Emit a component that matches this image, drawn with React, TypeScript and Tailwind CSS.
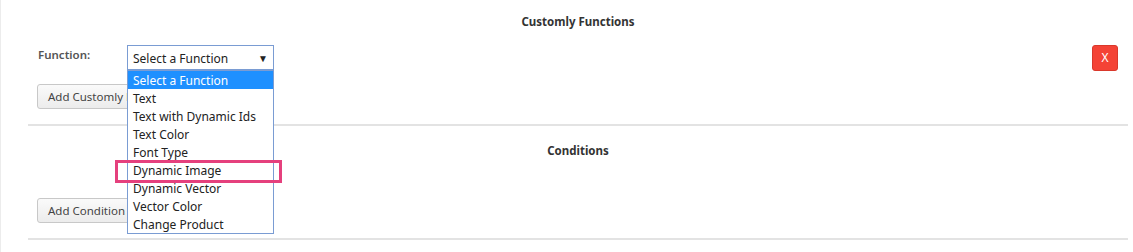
import React from 'react';

const options = [
    'Select a Function',
    'Text',
    'Text with Dynamic Ids',
    'Text Color',
    'Font Type',
    'Dynamic Image',
    'Dynamic Vector',
    'Vector Color',
    'Change Product',
];

const GrayButton: React.FC<{ label: string }> = ({ label }) => (
    <button className="h-[25px] px-[10px] rounded-[3px] border border-[#c8c8c8] bg-gradient-to-b from-[#fafafa] to-[#ececec] text-[11.5px] text-[#444] leading-none whitespace-nowrap">
        {label}
    </button>
);

const Divider = () => <div className="h-[2px] bg-[#e3e3e3]" />;

export default function App() {
    return (
        <div className="relative w-[1133px] h-[252px] bg-white border-l border-[#ececec] overflow-hidden font-['Noto_Sans','Open_Sans',sans-serif] text-[#333]">
            <div className="pl-[27px] pr-[5px]">
                {/* functions */}
                <h3 className="pt-[14px] h-[30px] text-center text-[11.5px] font-bold leading-[16px] text-[#333]">Customly Functions</h3>
                <div className="mt-[15px] flex items-start pl-[10px] pr-[10px]">
                    <label className="w-[89px] pt-[1px] text-[11.5px] font-semibold text-[#555]">Function:</label>
                    <div className="w-[147px] h-[25px] border border-[#7a9cd3] flex items-center justify-between pl-[5px] pr-[5px] pt-[2px] text-[12px] text-[#222]">
                        <span>Select a Function</span>
                        <span className="text-[10px] text-[#222]">▼</span>
                    </div>
                    <div className="flex-1" />
                    <button className="w-[26px] h-[26px] rounded-[3px] bg-[#f44336] border border-[#d9382b] text-white text-[12px] leading-none">X</button>
                </div>
                <div className="mt-[13px] pl-[9px] flex">
                    <GrayButton label="Add Customly Function" />
                </div>
                <div className="mt-[15px]">
                    <Divider />
                </div>

                {/* conditions */}
                <h3 className="mt-[17px] h-[16px] text-center text-[11.5px] font-bold leading-[16px] text-[#333]">Conditions</h3>
                <div className="mt-[39px] pl-[9px] flex">
                    <GrayButton label="Add Condition" />
                </div>
                <div className="mt-[15px]">
                    <Divider />
                </div>
            </div>

            {/* open select list */}
            <ul className="absolute left-[126px] top-[70px] w-[147px] border border-[#7a9cd3] bg-white text-[12px] text-[#222]">
                {options.map((o, i) => (
                    <li key={o} className={`h-[18px] leading-[18px] pl-[5px] pt-[1px] whitespace-nowrap ${i === 0 ? 'bg-[#1e90ff] text-white' : ''}`}>
                        {o}
                    </li>
                ))}
            </ul>
            <div className="absolute left-[114px] top-[160px] w-[167px] h-[23px] border-[3px] border-[#e5407d]" />
        </div>
    );
}
